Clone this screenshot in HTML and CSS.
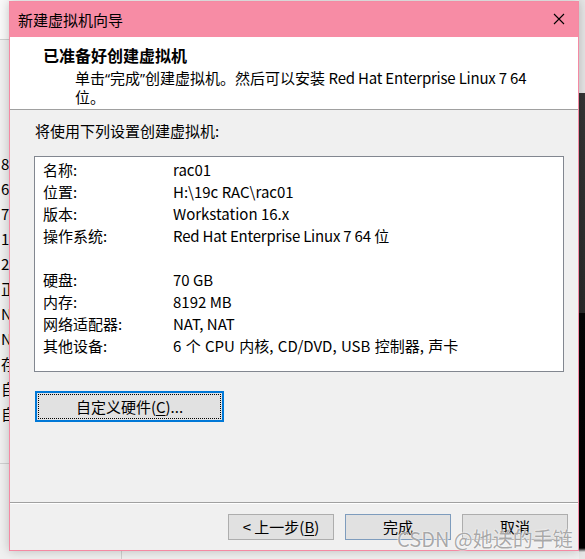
FILE: index.html
```html
<!DOCTYPE html>
<html lang="zh-CN">
<head>
<meta charset="utf-8">
<title>新建虚拟机向导</title>
<link rel="stylesheet" href="styles.css">
</head>
<body>
<div class="desktop">
  <div class="bgwin">
    <div class="bg-top"></div>
    <div class="bg-list">
      <div>8</div>
      <div>6</div>
      <div>7</div>
      <div>1</div>
      <div>2</div>
      <div>正</div>
      <div>N</div>
      <div>N</div>
      <div>存</div>
      <div>自</div>
      <div>自</div>
    </div>
    <div class="bg-bottomline"></div>
  </div>
  <div class="bg-right"></div>
  <div class="bg-vline"></div>

  <div class="dialog">
    <div class="titlebar">
      <span class="title">新建虚拟机向导</span>
      <svg class="close" width="12" height="12" viewBox="0 0 12 12"><path d="M1 1 L11 11 M11 1 L1 11" stroke="#000" stroke-width="1.1" fill="none"/></svg>
    </div>
    <div class="header">
      <div class="heading">已准备好创建虚拟机</div>
      <div class="subtitle">单击<span class="q">“</span>完成<span class="q">”</span>创建虚拟机。然后可以安装 <span class="lat">Red Hat Enterprise Linux 7 64</span><br>位。</div>
    </div>
    <div class="body">
      <div class="intro">将使用下列设置创建虚拟机:</div>
      <div class="listbox">
        <div class="row"><span class="k">名称:</span><span class="v">rac01</span></div>
        <div class="row"><span class="k">位置:</span><span class="v">H:\19c RAC\rac01</span></div>
        <div class="row"><span class="k">版本:</span><span class="v">Workstation 16.x</span></div>
        <div class="row"><span class="k">操作系统:</span><span class="v"><span class="lat">Red Hat Enterprise Linux 7 64</span> 位</span></div>
        <div class="row"><span class="k"></span><span class="v"></span></div>
        <div class="row"><span class="k">硬盘:</span><span class="v">70 GB</span></div>
        <div class="row"><span class="k">内存:</span><span class="v">8192 MB</span></div>
        <div class="row"><span class="k">网络适配器:</span><span class="v">NAT, NAT</span></div>
        <div class="row"><span class="k">其他设备:</span><span class="v wide">6 个 CPU 内核, CD/DVD, USB 控制器, 声卡</span></div>
      </div>
      <div class="custom-wrap">
        <button class="btn custom"><span class="focus">自定义硬件(<u>C</u>)...</span></button>
      </div>
    </div>
    <div class="footer">
      <button class="btn">&lt; 上一步(<u>B</u>)</button>
      <button class="btn default">完成</button>
      <button class="btn">取消</button>
    </div>
  </div>

  <div class="watermark">CSDN @她送的手链</div>
</div>
</body>
</html>
```

FILE: styles.css
```css
* { box-sizing: border-box; }

html, body {
  margin: 0;
  padding: 0;
}

body {
  width: 585px;
  height: 559px;
  overflow: hidden;
  background: #f0f0f0;
  font-family: "Noto Sans CJK SC", sans-serif;
  font-size: 15px;
  color: #000;
}

.desktop {
  position: relative;
  width: 585px;
  height: 559px;
  overflow: hidden;
}

/* background window (only its left edge is visible) */
.bgwin {
  position: absolute;
  left: 0;
  top: 0;
  width: 200px;
  height: 559px;
  background: #f0f0f0;
}

.bg-top {
  height: 40px;
  background: #f9f9f9;
  border-bottom: 1px solid #cfcfcf;
}

.bg-list {
  padding: 111px 0 0 1px;
  font-size: 15px;
  line-height: 25px;
  color: #000;
}

.bg-bottomline {
  position: absolute;
  left: 0;
  top: 463px;
  width: 200px;
  border-top: 1px solid #d0d0d0;
}

.bg-right {
  position: absolute;
  left: 579px;
  top: 0;
  width: 6px;
  height: 559px;
  background: linear-gradient(to bottom, #e6e6e6 0, #e6e6e6 93px, #353535 93px, #2a2a2a 313px, #050505 313px, #000 548px, #e8e8e8 552px);
}

.bg-vline {
  position: absolute;
  left: 121px;
  top: 540px;
  width: 1px;
  height: 19px;
  background: #cfcfcf;
}

/* dialog window */
.dialog {
  position: absolute;
  left: 9px;
  top: 1px;
  width: 570px;
  height: 550px;
  border: 1px solid #f48aa3;
  background: #f0f0f0;
  display: flex;
  flex-direction: column;
  box-shadow: 0 0 10px rgba(0, 0, 0, 0.22);
}

.titlebar {
  height: 35px;
  flex: none;
  background: #f78ca5;
  display: flex;
  align-items: center;
  justify-content: space-between;
  padding: 0 13px 0 8px;
}

.title {
  font-size: 15px;
  line-height: 20px;
}

.close {
  display: block;
  margin-top: -1px;
}

.header {
  flex: none;
  background: #fff;
  padding: 7px 0 0 33px;
  border-bottom: 1px solid #a0a0a0;
  height: 73px;
}

.heading {
  font-size: 16px;
  font-weight: bold;
  line-height: 22px;
}

.subtitle {
  padding-left: 32px;
  font-size: 15px;
  line-height: 18px;
  margin-top: 3px;
}

.lat {
  letter-spacing: -0.2px;
}

.q {
  font-family: "Noto Sans", sans-serif;
  font-size: 14px;
}

.body {
  flex: 1;
  padding: 11px 0 0 24px;
}

.intro {
  line-height: 20px;
  padding-left: 1px;
}

.listbox {
  margin-top: 15px;
  width: 530px;
  height: 216px;
  border: 1px solid #828790;
  background: #fff;
  padding: 2px 0 0 8px;
}

.row {
  display: flex;
  height: 22px;
  line-height: 22px;
}

.k {
  width: 130px;
  flex: none;
}

.v {
  flex: 1;
}

.v.wide {
  word-spacing: 1px;
}

.custom-wrap {
  margin-top: 19px;
  padding-left: 1px;
}

.btn {
  font-family: "Noto Sans CJK SC", sans-serif;
  font-size: 15px;
  color: #000;
  background: #e1e1e1;
  border: 1px solid #adadad;
  padding: 0;
  margin: 0;
  width: 106px;
  height: 26px;
  line-height: 22px;
}

.btn u {
  text-underline-offset: 2px;
}

.btn.custom {
  width: 189px;
  height: 31px;
  border: 2px solid #0078d7;
  padding: 1px;
  display: flex;
}

.focus {
  flex: 1;
  border: 1px dotted #000;
  line-height: 23px;
  text-align: center;
}

.footer {
  flex: none;
  height: 48px;
  border-top: 1px solid #a0a0a0;
  box-shadow: inset 0 1px 0 #fff;
  display: flex;
  justify-content: flex-end;
  align-items: flex-start;
  gap: 11px;
  padding: 11px 10px 0 0;
}

.btn.default {
  border-color: #7e9cbd;
}

.watermark {
  position: absolute;
  left: 397px;
  top: 526px;
  font-family: "Noto Sans CJK SC", sans-serif;
  font-size: 20px;
  line-height: 26px;
  color: rgba(140, 140, 140, 0.75);
  text-shadow: 0 0 1px #fff, 0 0 2px #fff;
  white-space: nowrap;
}
```
